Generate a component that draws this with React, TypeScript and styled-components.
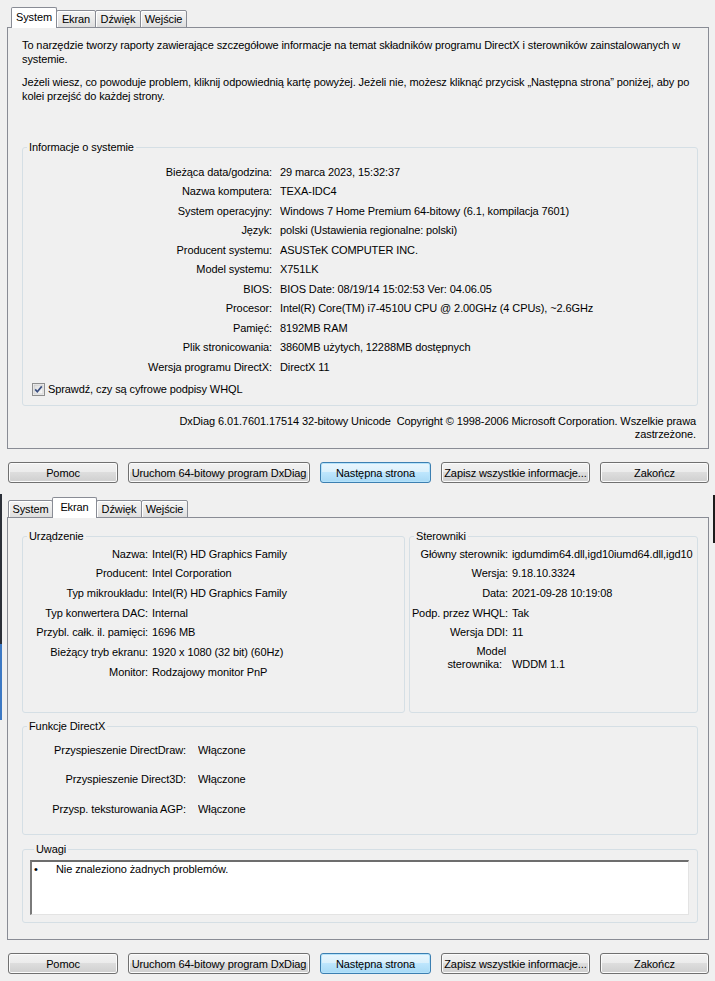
import React from 'react';
import styled, { createGlobalStyle } from 'styled-components';

const GlobalStyle = createGlobalStyle`
  html, body { margin: 0; padding: 0; background: #f0f0f0; }
  body {
    font-family: "Liberation Sans", Arial, sans-serif;
    font-size: 11px;
    letter-spacing: -0.1px;
    color: #000;
  }
  * { box-sizing: border-box; }
`;

const Screen = styled.div`
  position: relative;
  width: 715px;
  height: 981px;
  overflow: hidden;
  display: flex;
  flex-direction: column;
  background: #f0f0f0;
`;

const EdgeStrip = styled.div<{ $side: 'left' | 'right'; $top: number; $h: number; $bg: string }>`
  position: absolute;
  ${p => (p.$side === 'left' ? 'left: 0;' : 'right: 0;')}
  top: ${p => p.$top}px;
  width: 2px;
  height: ${p => p.$h}px;
  background: ${p => p.$bg};
`;

const Window = styled.section<{ $top: number }>`
  display: flex;
  flex-direction: column;
  padding: ${p => p.$top}px 6px 0 7px;
`;

const TabStrip = styled.div<{ $start: number }>`
  position: relative;
  z-index: 2;
  display: flex;
  align-items: flex-end;
  height: 21px;
  margin-bottom: -1px;
  padding-left: ${p => p.$start}px;
`;

const Tab = styled.div<{ $active?: boolean; $w: number }>`
  width: ${p => p.$w}px;
  height: ${p => (p.$active ? 21 : 18)}px;
  margin-left: -1px;
  border: 1px solid #898c95;
  border-bottom: ${p => (p.$active ? 'none' : '1px solid #898c95')};
  border-radius: 2px 2px 0 0;
  background: ${p =>
    p.$active ? '#ffffff' : 'linear-gradient(#f4f4f4 0%, #ebebeb 50%, #dedede 100%)'};
  box-shadow: ${p => (p.$active ? 'none' : 'inset 1px 1px 0 #ffffff')};
  text-align: center;
  line-height: ${p => (p.$active ? 17 : 15)}px;
  padding-top: 1px;
  white-space: nowrap;
  &:first-child { margin-left: 0; }
`;

const Panel = styled.div<{ $h: number; $pad: string }>`
  position: relative;
  z-index: 1;
  height: ${p => p.$h}px;
  border: 1px solid #898c95;
  background: #f0f0f0;
  padding: ${p => p.$pad};
  display: flex;
  flex-direction: column;
`;

const Para = styled.p`
  margin: 0;
  line-height: 14px;
  white-space: nowrap;
  & + & { margin-top: 9px; }
`;

const Group = styled.fieldset<{ $h?: number; $mt?: number; $pad?: string }>`
  margin: ${p => p.$mt ?? 0}px 0 0 0;
  padding: ${p => p.$pad ?? '0'};
  border: 1px solid #d5dfe5;
  border-radius: 3px;
  min-width: 0;
  ${p => (p.$h ? `height: ${p.$h}px;` : '')}
`;

const Legend = styled.legend`
  padding: 0 2px;
  margin-left: 4px;
  line-height: 14px;
  height: 14px;
`;

const InfoGrid = styled.div<{ $label: number; $gap: number; $rows: string; $mt: number }>`
  display: grid;
  grid-template-columns: ${p => p.$label}px minmax(0, 1fr);
  grid-template-rows: ${p => p.$rows};
  column-gap: ${p => p.$gap}px;
  align-items: center;
  margin-top: ${p => p.$mt}px;
`;

const Label = styled.div`
  text-align: right;
  white-space: nowrap;
`;

const Value = styled.div`
  white-space: nowrap;
  overflow: hidden;
`;

const TwoLineLabel = styled.div`
  align-self: start;
  padding-top: 3px;
  text-align: right;
  line-height: 13px;
  white-space: nowrap;
`;

const LabelLine = styled.span<{ $pr: number }>`
  display: block;
  padding-right: ${p => p.$pr}px;
`;

const LowValue = styled.div`
  align-self: start;
  padding-top: 16px;
  line-height: 13px;
  white-space: nowrap;
`;

const CheckRow = styled.label`
  display: flex;
  align-items: center;
  gap: 3px;
  height: 18px;
  margin-top: 3.5px;
  padding-left: 9px;
`;

const Footer = styled.div`
  margin-top: 9px;
  padding-right: 2px;
  text-align: right;
  line-height: 13.3px;
  white-space: pre;
`;

const ButtonRow = styled.div`
  display: flex;
  gap: 10px;
  margin-top: 13px;
  padding-left: 1px;
`;

const Button = styled.button<{ $w: number; $default?: boolean }>`
  width: ${p => p.$w}px;
  height: 21px;
  padding: 0;
  font: inherit;
  letter-spacing: inherit;
  color: #000;
  border: 1px solid ${p => (p.$default ? '#3c7fb1' : '#707070')};
  border-radius: 3px;
  background: ${p =>
    p.$default
      ? 'linear-gradient(#eaf6fd 0%, #d9f0fc 50%, #bee6fd 50%, #a7d9f5 100%)'
      : 'linear-gradient(#f2f2f2 0%, #ebebeb 50%, #dddddd 50%, #cfcfcf 100%)'};
  box-shadow: inset 0 0 0 1px ${p => (p.$default ? '#b5e3fb' : '#fbfbfb')};
  white-space: nowrap;
  cursor: default;
`;

const TopGroups = styled.div`
  display: grid;
  grid-template-columns: 383px 289px;
  column-gap: 4px;
`;

const NotesBox = styled.div`
  margin-top: 4px;
  height: 55px;
  background: #ffffff;
  border-style: solid;
  border-width: 2px 1px 1px 2px;
  border-color: #6d6d6d #e3e3e3 #e3e3e3 #7a7a7a;
  padding: 0 0 0 2px;
  line-height: 14px;
  display: flex;
`;

const Bullet = styled.span`
  width: 22px;
`;

const Checkbox = () => (
  <svg width="13" height="13" viewBox="0 0 13 13">
    <defs>
      <linearGradient id="cbg" x1="0" y1="0" x2="1" y2="1">
        <stop offset="0" stopColor="#dcdcdc" />
        <stop offset="1" stopColor="#fbfbfb" />
      </linearGradient>
    </defs>
    <rect x="0.5" y="0.5" width="12" height="12" fill="#f4f4f4" stroke="#8e8f8f" />
    <rect x="2" y="2" width="9" height="9" fill="url(#cbg)" stroke="#c0c0c0" strokeWidth="0.6" />
    <path d="M3.2 6.4 L5.3 8.8 L9.8 3.4" fill="none" stroke="#3a4f80" strokeWidth="1.7" />
  </svg>
);

const systemRows: [string, string][] = [
  ['Bieżąca data/godzina:', '29 marca 2023, 15:32:37'],
  ['Nazwa komputera:', 'TEXA-IDC4'],
  ['System operacyjny:', 'Windows 7 Home Premium 64-bitowy (6.1, kompilacja 7601)'],
  ['Język:', 'polski (Ustawienia regionalne: polski)'],
  ['Producent systemu:', 'ASUSTeK COMPUTER INC.'],
  ['Model systemu:', 'X751LK'],
  ['BIOS:', 'BIOS Date: 08/19/14 15:02:53 Ver: 04.06.05'],
  ['Procesor:', 'Intel(R) Core(TM) i7-4510U CPU @ 2.00GHz (4 CPUs), ~2.6GHz'],
  ['Pamięć:', '8192MB RAM'],
  ['Plik stronicowania:', '3860MB użytych, 12288MB dostępnych'],
  ['Wersja programu DirectX:', 'DirectX 11'],
];

const deviceRows: [string, string][] = [
  ['Nazwa:', 'Intel(R) HD Graphics Family'],
  ['Producent:', 'Intel Corporation'],
  ['Typ mikroukładu:', 'Intel(R) HD Graphics Family'],
  ['Typ konwertera DAC:', 'Internal'],
  ['Przybl. całk. il. pamięci:', '1696 MB'],
  ['Bieżący tryb ekranu:', '1920 x 1080 (32 bit) (60Hz)'],
  ['Monitor:', 'Rodzajowy monitor PnP'],
];

const driverRows: [string, string][] = [
  ['Główny sterownik:', 'igdumdim64.dll,igd10iumd64.dll,igd10'],
  ['Wersja:', '9.18.10.3324'],
  ['Data:', '2021-09-28 10:19:08'],
  ['Podp. przez WHQL:', 'Tak'],
  ['Wersja DDI:', '11'],
];

const featureRows: [string, string][] = [
  ['Przyspieszenie DirectDraw:', 'Włączone'],
  ['Przyspieszenie Direct3D:', 'Włączone'],
  ['Przysp. teksturowania AGP:', 'Włączone'],
];

const tabNames = ['System', 'Ekran', 'Dźwięk', 'Wejście'];

const Tabs = ({ active, widths, start }: { active: number; widths: number[]; start: number }) => (
  <TabStrip $start={start}>
    {tabNames.map((t, i) => (
      <Tab key={t} $w={widths[i]} $active={i === active}>
        {t}
      </Tab>
    ))}
  </TabStrip>
);

const Buttons = () => (
  <ButtonRow>
    <Button $w={110}>Pomoc</Button>
    <Button $w={182}>Uruchom 64-bitowy program DxDiag</Button>
    <Button $w={111} $default>
      Następna strona
    </Button>
    <Button $w={149}>Zapisz wszystkie informacje...</Button>
    <Button $w={109}>Zakończ</Button>
  </ButtonRow>
);

const Rows = ({ rows }: { rows: [string, string][] }) => (
  <>
    {rows.map(([l, v]) => (
      <React.Fragment key={l}>
        <Label>{l}</Label>
        <Value>{v}</Value>
      </React.Fragment>
    ))}
  </>
);

export default function App() {
  return (
    <Screen>
      <GlobalStyle />
      <EdgeStrip $side="left" $top={494} $h={150} $bg="#2b2f38" />
      <EdgeStrip $side="left" $top={644} $h={76} $bg="#3d79c4" />
      <EdgeStrip $side="right" $top={495} $h={48} $bg="#1c1c1c" />

      <Window $top={7}>
        <Tabs active={0} widths={[46, 40, 46, 47]} start={4} />
        <Panel $h={422} $pad="10px 10px 0 14px">
          <Para>
            To narzędzie tworzy raporty zawierające szczegółowe informacje na temat składników programu DirectX i sterowników zainstalowanych w
            <br />
            systemie.
          </Para>
          <Para>
            Jeżeli wiesz, co powoduje problem, kliknij odpowiednią kartę powyżej. Jeżeli nie, możesz kliknąć przycisk „Następna strona” poniżej, aby po
            <br />
            kolei przejść do każdej strony.
          </Para>
          <Group $mt={37} $pad="0 0 7px 0">
            <Legend>Informacje o systemie</Legend>
            <InfoGrid $label={249} $gap={8} $rows="repeat(11, 19.5px)" $mt={8}>
              <Rows rows={systemRows} />
            </InfoGrid>
            <CheckRow>
              <Checkbox />
              Sprawdź, czy są cyfrowe podpisy WHQL
            </CheckRow>
          </Group>
          <Footer>
            {'DxDiag 6.01.7601.17514 32-bitowy Unicode  Copyright © 1998-2006 Microsoft Corporation. Wszelkie prawa'}
            <br />
            zastrzeżone.
          </Footer>
        </Panel>
        <Buttons />
      </Window>

      <Window $top={14}>
        <Tabs active={1} widths={[45, 45, 46, 47]} start={1} />
        <Panel $h={423} $pad="11px 10px 0 14px">
          <TopGroups>
            <Group $h={184}>
              <Legend>Urządzenie</Legend>
              <InfoGrid $label={125} $gap={4} $rows="repeat(7, 19.67px)" $mt={1}>
                <Rows rows={deviceRows} />
              </InfoGrid>
            </Group>
            <Group $h={184}>
              <Legend>Sterowniki</Legend>
              <InfoGrid $label={98} $gap={4} $rows="repeat(5, 19.67px) 32px" $mt={1}>
                <Rows rows={driverRows} />
                <TwoLineLabel>
                  <LabelLine $pr={2}>Model</LabelLine>
                  <LabelLine $pr={6}>sterownika:</LabelLine>
                </TwoLineLabel>
                <LowValue>WDDM 1.1</LowValue>
              </InfoGrid>
            </Group>
          </TopGroups>
          <Group $mt={6} $h={116}>
            <Legend>Funkcje DirectX</Legend>
            <InfoGrid $label={163} $gap={12} $rows="repeat(3, 29.5px)" $mt={2}>
              <Rows rows={featureRows} />
            </InfoGrid>
          </Group>
          <Group $mt={7} $pad="0 8px 7px 7px">
            <Legend>Uwagi</Legend>
            <NotesBox>
              <Bullet>•</Bullet>
              Nie znaleziono żadnych problemów.
            </NotesBox>
          </Group>
        </Panel>
        <Buttons />
      </Window>
    </Screen>
  );
}
